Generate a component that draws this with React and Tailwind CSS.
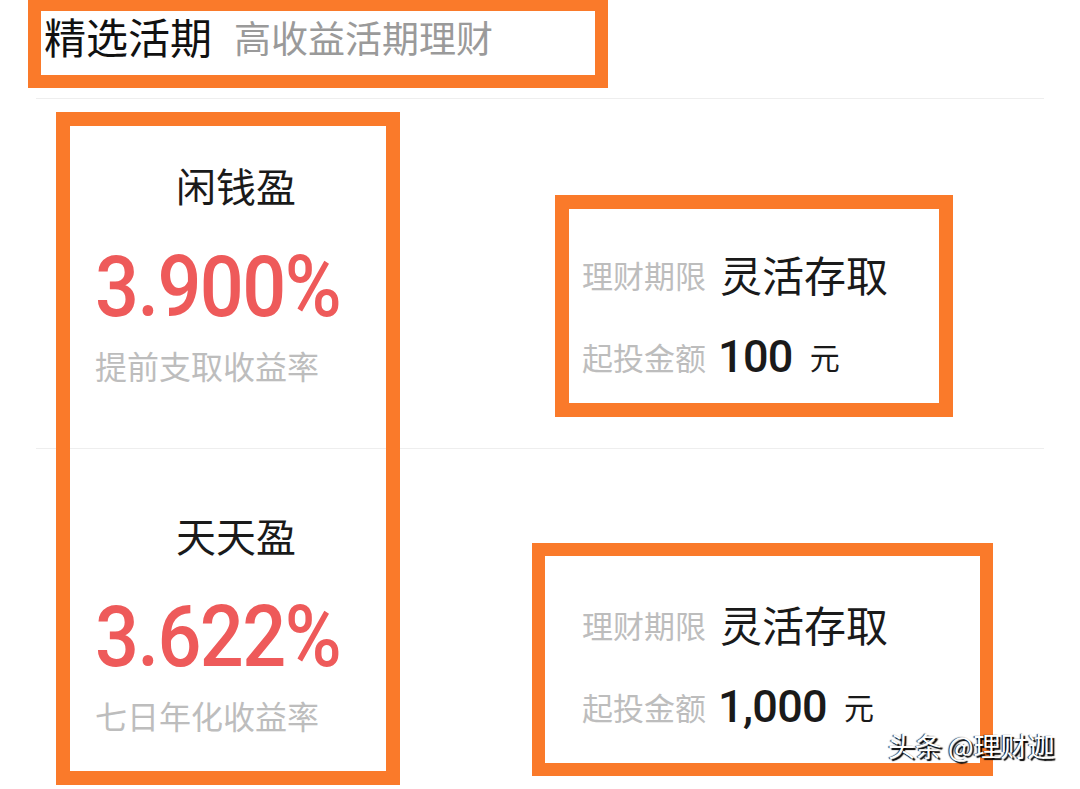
import React from "react";

const CJK = { fontFamily: '"Noto Sans CJK SC", "Noto Sans", sans-serif' };
const NUM = { fontFamily: 'Roboto, "Noto Sans", sans-serif' };

function Product({ name, rate, rateLabel, minAmount }) {
  return (
    <div className="flex h-[350px] border-b border-[#eeeeee] mx-[36px]">
      <div className="w-[510px] flex flex-col pl-[59px]">
        <div className="pl-[81px] pt-[66px] text-[40px] leading-none text-[#1a1a1a]" style={CJK}>
          {name}
        </div>
        <div
          className="mt-[39px] text-[86px] leading-none font-medium tracking-[-0.02em] text-[#ee5a5a] scale-x-[0.9] origin-left whitespace-nowrap"
          style={NUM}
        >
          {rate}
        </div>
        <div className="mt-[19px] text-[32px] leading-none text-[#bdbdbd]" style={CJK}>
          {rateLabel}
        </div>
      </div>
      <div className="flex flex-col pl-[36px] pt-[154px]">
        <div className="flex items-center h-[42px]">
          <span className="text-[31px] leading-none text-[#bdbdbd]" style={CJK}>理财期限</span>
          <span className="ml-[14px] text-[42px] leading-none text-[#1a1a1a]" style={CJK}>灵活存取</span>
        </div>
        <div className="flex items-center h-[46px] mt-[38px]">
          <span className="text-[31px] leading-none text-[#bdbdbd]" style={CJK}>起投金额</span>
          <span
            className="ml-[12px] text-[45px] leading-none font-medium tracking-[-0.015em] text-[#1a1a1a]"
            style={NUM}
          >
            {minAmount}
          </span>
          <span className="ml-[17px] text-[30px] leading-none text-[#1a1a1a]" style={CJK}>元</span>
        </div>
      </div>
    </div>
  );
}

export default function App() {
  return (
    <div className="relative w-[1080px] h-[789px] bg-white overflow-hidden">
      <div className="h-[99px] mx-[36px] border-b border-[#eeeeee] flex items-start pt-[15px] pl-[8px]" style={CJK}>
        <span className="text-[42px] leading-none text-[#111111]">精选活期</span>
        <span className="ml-[22px] mt-[4px] text-[37px] leading-none text-[#9a9a9a]">高收益活期理财</span>
      </div>

      <Product name="闲钱盈" rate="3.900%" rateLabel="提前支取收益率" minAmount="100" />
      <Product name="天天盈" rate="3.622%" rateLabel="七日年化收益率" minAmount="1,000" />

      {/* annotation boxes */}
      <div className="absolute left-[28px] top-[0px] w-[580px] h-[88px] border-[13px] border-t-[11px] border-[#fa7a2a]" />
      <div className="absolute left-[56px] top-[112px] w-[344px] h-[673px] border-[14px] border-[#fa7a2a]" />
      <div className="absolute left-[555px] top-[195px] w-[398px] h-[222px] border-[14px] border-[#fa7a2a]" />
      <div className="absolute left-[532px] top-[543px] w-[461px] h-[233px] border-[13px] border-[#fa7a2a]" />

      {/* watermark */}
      <div
        className="absolute left-[888px] top-[732px] text-[27px] leading-none text-white [text-shadow:2px_2px_1px_#000,-1px_0_1px_#222]"
        style={CJK}
      >
        头条 @理财迦
      </div>
    </div>
  );
}
